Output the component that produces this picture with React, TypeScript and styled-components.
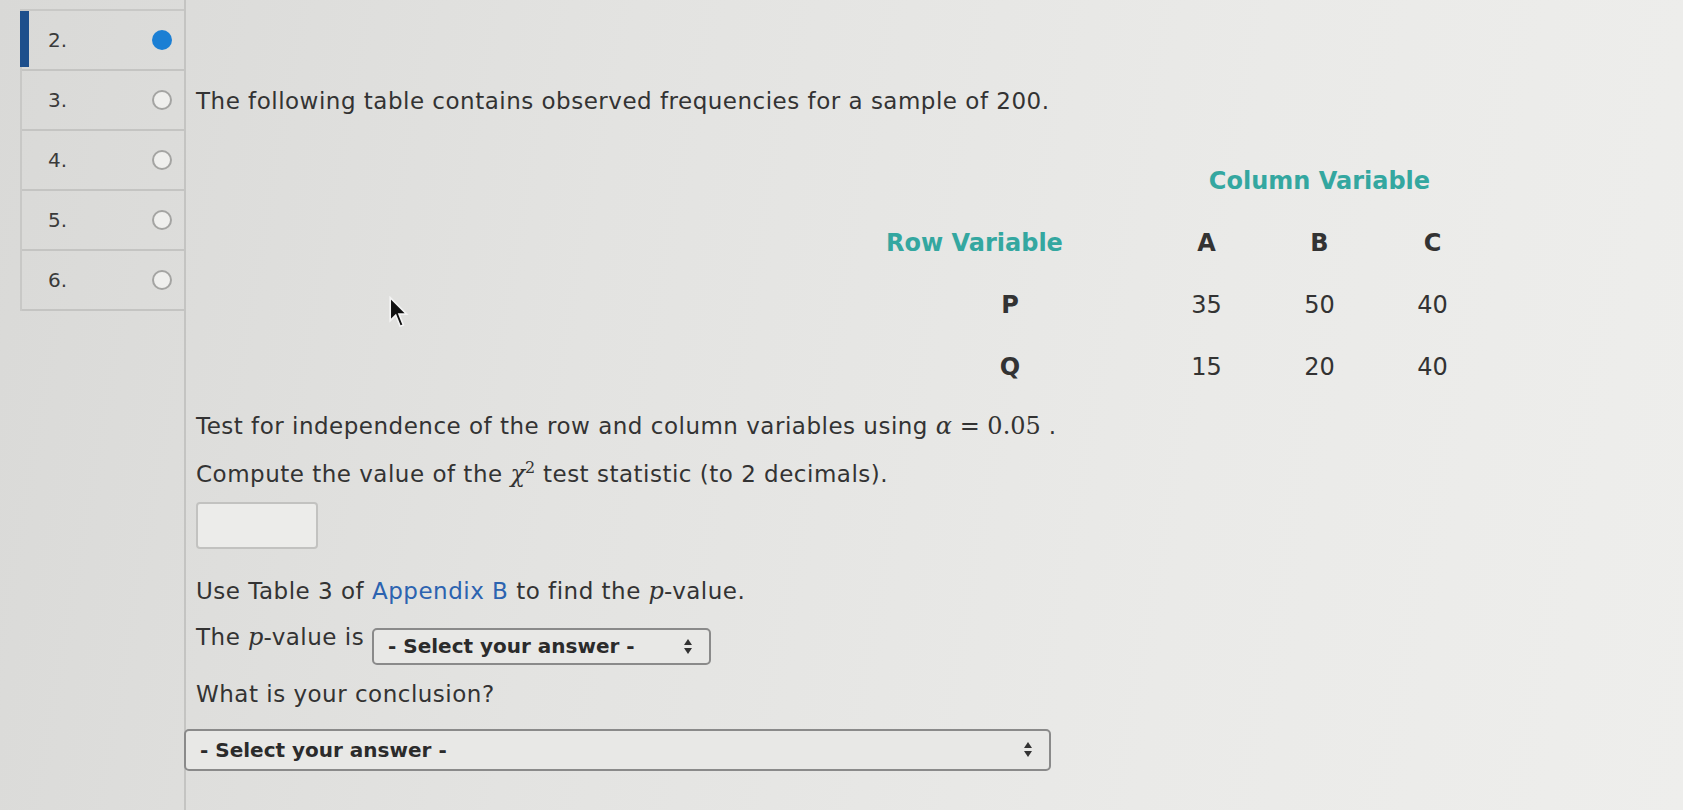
import React from "react";
import styled, { createGlobalStyle } from "styled-components";

const GlobalStyle = createGlobalStyle`
  html, body {
    margin: 0;
    padding: 0;
    height: 100%;
  }
  body {
    background: linear-gradient(100deg, #d9d9d7 0%, #e3e3e1 35%, #eaeae8 70%, #eeeeec 100%);
    font-family: "DejaVu Sans", Verdana, sans-serif;
    color: #333;
    overflow: hidden;
  }
`;

const Page = styled.div`
  position: relative;
  display: flex;
  width: 1683px;
  height: 810px;
`;

const Sidebar = styled.nav`
  width: 186px;
  flex-shrink: 0;
  padding-top: 9px;
  padding-left: 20px;
  box-sizing: border-box;
  border-right: 2px solid #c4c4c2;
`;

const QuestionList = styled.ul`
  list-style: none;
  margin: 0;
  padding: 0;
  border-left: 2px solid #c8c8c6;
  border-top: 2px solid #c8c8c6;
`;

const QuestionItem = styled.li<{ $active?: boolean }>`
  position: relative;
  display: flex;
  align-items: center;
  justify-content: space-between;
  height: 58px;
  padding: 0 12px 0 26px;
  border-bottom: 2px solid #c4c4c2;
  font-size: 20px;
  color: #3a3a3a;
  &::before {
    content: "";
    display: ${p => (p.$active ? "block" : "none")};
    position: absolute;
    left: -2px;
    top: 0;
    bottom: 2px;
    width: 9px;
    background: #1d4f8c;
  }
`;

const Status = styled.span<{ $done?: boolean }>`
  width: 20px;
  height: 20px;
  border-radius: 50%;
  box-sizing: border-box;
  border: ${p => (p.$done ? "none" : "2.5px solid #a4a4a2")};
  background: ${p => (p.$done ? "#1b7fd4" : "#efefed")};
`;

const Main = styled.main`
  flex: 1;
  padding: 86px 0 0 10px;
  font-size: 23px;
  letter-spacing: 0.5px;
  line-height: 30px;
`;

const Para = styled.p<{ $gap?: number }>`
  margin: ${p => p.$gap ?? 0}px 0 0;
  white-space: nowrap;
`;

const Math = styled.span`
  font-family: "DejaVu Serif", "Liberation Serif", serif;
  font-size: 24px;
  letter-spacing: 0;
`;

const MathVar = styled.i`
  font-family: "DejaVu Serif", "Liberation Serif", serif;
  font-size: 24px;
  letter-spacing: 0;
`;

const Table = styled.div`
  display: grid;
  grid-template-columns: 264px 113px 113px 113px;
  grid-auto-rows: 62px;
  align-items: center;
  margin: 34px 0 0 690px;
  width: max-content;
  font-size: 24px;
  letter-spacing: 0;
`;

const Cell = styled.div<{ $bold?: boolean; $teal?: boolean; $span?: number; $align?: string; $pad?: number }>`
  grid-column: ${p => (p.$span ? `span ${p.$span}` : "auto")};
  text-align: ${p => p.$align ?? "center"};
  padding-right: ${p => p.$pad ?? 0}px;
  font-weight: ${p => (p.$bold ? 700 : 400)};
  color: ${p => (p.$teal ? "#34a7a0" : "#333")};
  white-space: nowrap;
`;

const AnswerBox = styled.div`
  width: 118px;
  height: 43px;
  margin-top: 13px;
  border: 2px solid #c2c2c0;
  border-radius: 4px;
  background: #ececea;
`;

const Link = styled.span`
  color: #2c63b0;
`;

const Select = styled.span<{ $width: number }>`
  display: inline-flex;
  align-items: center;
  justify-content: space-between;
  box-sizing: border-box;
  width: ${p => p.$width}px;
  height: 37px;
  padding: 0 16px 0 14px;
  border: 2px solid #8a8a8a;
  border-radius: 5px;
  background: #e8e8e6;
  font-size: 20px;
  font-weight: 700;
  letter-spacing: 0;
  color: #2b2b2b;
  vertical-align: -8px;
`;

const WideSelect = styled(Select)`
  display: flex;
  height: 42px;
  margin-top: 20px;
  margin-left: -12px;
`;

const Cursor = styled.svg`
  position: absolute;
  left: 388px;
  top: 296px;
`;

const Arrows = () => (
  <svg width="10" height="17" viewBox="0 0 10 17">
    <path d="M5 1 L9 7 H1 Z" fill="#333" />
    <path d="M5 16 L9 10 H1 Z" fill="#333" />
  </svg>
);

const questions = [2, 3, 4, 5, 6];

const App = () => {
  return (
    <Page>
      <GlobalStyle />
      <Sidebar>
        <QuestionList>
          {questions.map(n => (
            <QuestionItem key={n} $active={n === 2}>
              <span>{n}.</span>
              <Status $done={n === 2} />
            </QuestionItem>
          ))}
        </QuestionList>
      </Sidebar>
      <Main>
        <Para>The following table contains observed frequencies for a sample of 200.</Para>

        <Table>
          <Cell />
          <Cell $bold $teal $span={3}>
            Column Variable
          </Cell>
          <Cell $bold $teal $align="left">
            Row Variable
          </Cell>
          <Cell $bold>A</Cell>
          <Cell $bold>B</Cell>
          <Cell $bold>C</Cell>
          <Cell $bold $pad={16}>
            P
          </Cell>
          <Cell>35</Cell>
          <Cell>50</Cell>
          <Cell>40</Cell>
          <Cell $bold $pad={16}>
            Q
          </Cell>
          <Cell>15</Cell>
          <Cell>20</Cell>
          <Cell>40</Cell>
        </Table>

        <Para $gap={13}>
          Test for independence of the row and column variables using{" "}
          <Math>
            <i>α</i> = 0.05
          </Math>{" "}
          .
        </Para>
        <Para $gap={12}>
          Compute the value of the{" "}
          <Math>
            <i>χ</i>
            <sup style={{ fontSize: 16 }}>2</sup>
          </Math>{" "}
          test statistic (to 2 decimals).
        </Para>
        <AnswerBox />
        <Para $gap={27}>
          Use Table 3 of <Link>Appendix B</Link> to find the <MathVar>p</MathVar>-value.
        </Para>
        <Para $gap={16}>
          The <MathVar>p</MathVar>-value is{" "}
          <Select $width={339}>
            - Select your answer -
            <Arrows />
          </Select>
        </Para>
        <Para $gap={14}>What is your conclusion?</Para>
        <WideSelect $width={867}>
          - Select your answer -
          <Arrows />
        </WideSelect>
      </Main>
      <Cursor width="22" height="34" viewBox="0 0 20 30">
        <path d="M2 1 L2 22 L7 17 L11 27 L14 26 L10 16 L17 16 Z" fill="#111" stroke="#f4f4f4" strokeWidth="1.5" />
      </Cursor>
    </Page>
  );
};

export default App;
